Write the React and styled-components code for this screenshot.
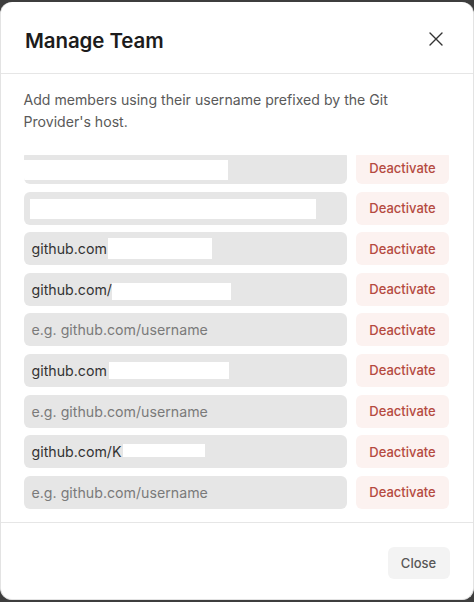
import React, { useEffect, useRef } from 'react';
import styled, { createGlobalStyle } from 'styled-components';

const GlobalStyle = createGlobalStyle`
    html, body {
        margin: 0;
        padding: 0;
        height: 100%;
        background: #3d3d3d;
        overflow: hidden;
    }
    body {
        font-family: Inter, "Noto Sans", "Liberation Sans", sans-serif;
        -webkit-font-smoothing: antialiased;
    }
    * { box-sizing: border-box; }
`

const Modal = styled.div`
    margin-top: 2px;
    height: 598px;
    background: #fff;
    border: 1.5px solid #e3e3e3;
    border-top: none;
    border-radius: 12px;
    display: flex;
    flex-direction: column;
    overflow: hidden;
`

const Header = styled.div`
    height: 72px;
    padding: 6px 24px 0 24px;
    display: flex;
    align-items: center;
    justify-content: space-between;
    border-bottom: 1px solid #e6e6e6;
    flex-shrink: 0;
`

const Title = styled.h3`
    margin: 0;
    font-size: 20.5px;
    font-weight: 600;
    color: #1c1c1c;
    letter-spacing: -0.1px;
`

const CloseIcon = styled.button`
    border: none;
    background: transparent;
    padding: 0;
    margin-right: 3px;
    margin-top: -4px;
    width: 20px;
    height: 20px;
    display: flex;
    align-items: center;
    justify-content: center;
    color: #333;
    cursor: pointer;
`

const Body = styled.div`
    flex: 1;
    display: flex;
    flex-direction: column;
    min-height: 0;
    border-bottom: 1px solid #e6e6e6;
`

const Description = styled.p`
    margin: 15px 24px 22px 22.5px;
    font-size: 14.1px;
    line-height: 22px;
    color: #5a5a5a;
`

const ScrollArea = styled.div`
    flex: 1;
    min-height: 0;
    overflow: hidden;
    padding: 0 24px 13px 22.5px;
`

const MemberList = styled.div`
    display: flex;
    flex-direction: column;
    gap: 7.6px;
`

const Row = styled.div`
    display: flex;
    gap: 9px;
    height: 33px;
`

const Field = styled.div`
    flex: 1;
    background: #e6e6e6;
    border-radius: 6px;
    display: flex;
    align-items: center;
    padding-left: 8px;
    font-size: 14.2px;
    color: ${p => p.$empty ? '#7a7a7a' : '#333'};
    white-space: nowrap;
    overflow: hidden;
`

const Redacted = styled.span`
    display: inline-block;
    background: #fff;
    width: ${p => p.$w}px;
    height: ${p => p.$h || 20}px;
    margin-left: ${p => p.$ml || 0}px;
    margin-top: ${p => p.$mt || 0}px;
`

const DeactivateButton = styled.button`
    width: 93px;
    border: none;
    border-radius: 6px;
    background: #fcf2f0;
    color: #b54a3f;
    font-family: inherit;
    font-size: 13px;
    font-weight: 500;
    cursor: pointer;
`

const Footer = styled.div`
    height: 76px;
    flex-shrink: 0;
    display: flex;
    justify-content: flex-end;
    align-items: flex-start;
    padding: 24px 23.5px 0 0;
`

const CloseButton = styled.button`
    width: 62px;
    height: 32px;
    border: none;
    border-radius: 6px;
    background: #f3f3f3;
    color: #575757;
    font-family: inherit;
    font-size: 13px;
    font-weight: 500;
    cursor: pointer;
`

const members = [
    { prefix: '', redact: { w: 204, ml: -8, h: 20, mt: 4 } },
    { prefix: '', redact: { w: 286, ml: -2, h: 20, mt: 2 } },
    { prefix: 'github.com', redact: { w: 104, h: 21, ml: 1 } },
    { prefix: 'github.com/', redact: { w: 119, h: 17, mt: 4 } },
    { empty: true },
    { prefix: 'github.com', redact: { w: 120, h: 17, ml: 2 } },
    { empty: true },
    { prefix: 'github.com/K', redact: { w: 82, h: 13, mt: -2, ml: 1 } },
    { empty: true },
]

const XIcon = () => (
    <svg width="16" height="16" viewBox="0 0 16 16" fill="none" stroke="currentColor" strokeWidth="1.4" strokeLinecap="round">
        <path d="M2 2L14 14M14 2L2 14" />
    </svg>
)

export default function App() {
    const scrollRef = useRef(null)

    useEffect(() => {
        if (scrollRef.current) {
            scrollRef.current.scrollTop = scrollRef.current.scrollHeight
        }
    }, [])

    return (
        <>
            <GlobalStyle />
            <Modal>
                <Header>
                    <Title>Manage Team</Title>
                    <CloseIcon aria-label="Close"><XIcon /></CloseIcon>
                </Header>
                <Body>
                    <Description>
                        Add members using their username prefixed by the Git Provider's host.
                    </Description>
                    <ScrollArea ref={scrollRef}>
                        <MemberList>
                            {members.map((m, i) => (
                                <Row key={i}>
                                    <Field $empty={m.empty}>
                                        {m.empty ? 'e.g. github.com/username' : (
                                            <>
                                                {m.prefix}
                                                <Redacted $w={m.redact.w} $h={m.redact.h} $ml={m.redact.ml} $mt={m.redact.mt} />
                                            </>
                                        )}
                                    </Field>
                                    <DeactivateButton>Deactivate</DeactivateButton>
                                </Row>
                            ))}
                        </MemberList>
                    </ScrollArea>
                </Body>
                <Footer>
                    <CloseButton>Close</CloseButton>
                </Footer>
            </Modal>
        </>
    )
}
